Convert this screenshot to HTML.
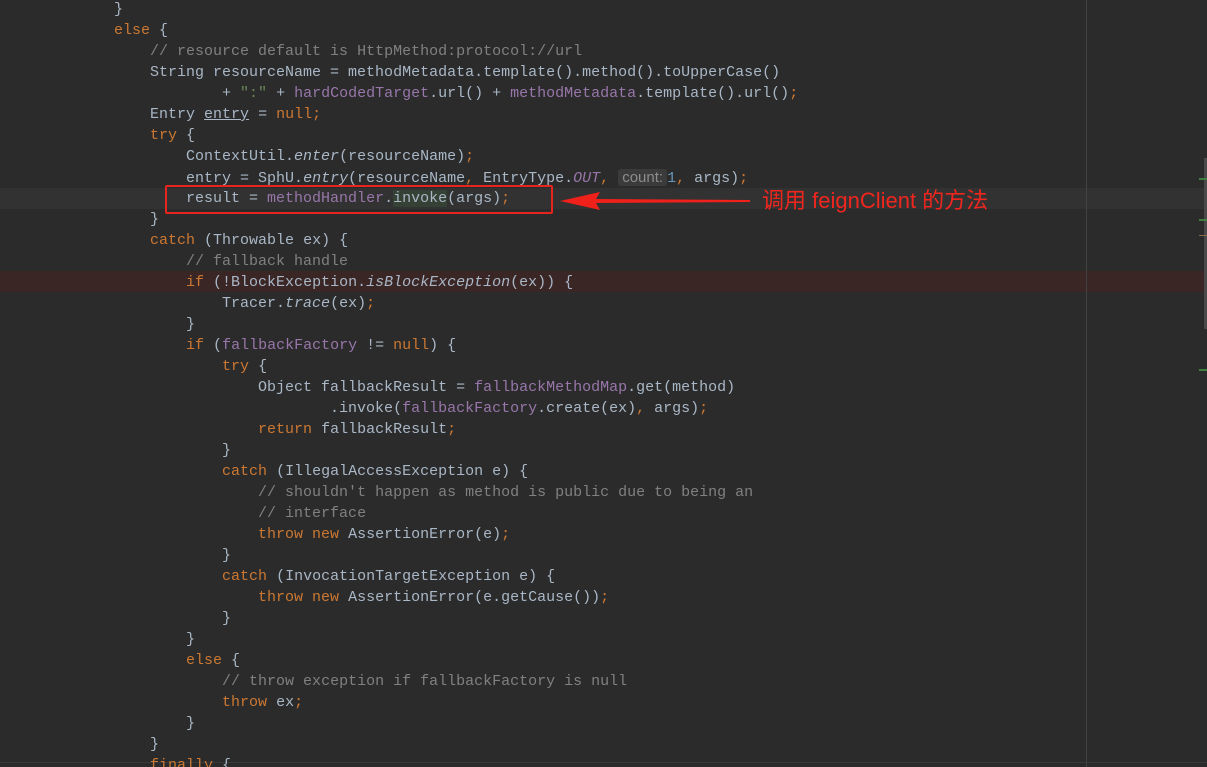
<!DOCTYPE html>
<html><head><meta charset="utf-8"><style>
html,body{margin:0;padding:0;background:#2b2b2b;width:1207px;height:767px;overflow:hidden;position:relative}
.l{position:absolute;left:6px;height:21px;line-height:21px;font-family:"Liberation Mono",monospace;font-size:15px;color:#a9b7c6;white-space:pre;margin-top:2px}
.k{color:#cc7832}.c{color:#808080}.f{color:#9876aa}.s{color:#6a8759}.n{color:#6897bb}.i{font-style:italic}.fi{color:#9876aa;font-style:italic}
.u{text-decoration:underline}
.hint{background:#3b3b3b;color:#8c8c8c;font-family:"Liberation Sans",sans-serif;font-size:15px;padding:0 4px;border-radius:3px}
</style></head><body>
<div style="position:absolute;left:0;top:188px;width:1207px;height:21px;background:#323232"></div>
<div style="position:absolute;left:0;top:271px;width:1207px;height:21px;background:#3b2626"></div>
<div style="position:absolute;left:1086px;top:0;width:1px;height:767px;background:#424242"></div>
<div style="position:absolute;left:1204px;top:158px;width:3px;height:171px;background:#4a4a4a"></div>
<div style="position:absolute;left:1199px;top:178px;width:8px;height:2px;background:#3f7f3f"></div>
<div style="position:absolute;left:1199px;top:219px;width:8px;height:2px;background:#3f7f3f"></div>
<div style="position:absolute;left:1199px;top:235px;width:8px;height:1px;background:#8a6a4a"></div>
<div style="position:absolute;left:1199px;top:369px;width:8px;height:2px;background:#3f7f3f"></div>
<div style="position:absolute;left:0;top:762px;width:1207px;height:1px;background:#3a3a3a"></div>

<div class="l" style="top:-3px">            }</div>
<div class="l" style="top:18px">            <span class="k">else</span> {</div>
<div class="l" style="top:39px">                <span class="c">// resource default is HttpMethod:protocol://url</span></div>
<div class="l" style="top:60px">                String resourceName = methodMetadata.template().method().toUpperCase()</div>
<div class="l" style="top:81px">                        + <span class="s">":"</span> + <span class="f">hardCodedTarget</span>.url() + <span class="f">methodMetadata</span>.template().url()<span class="k">;</span></div>
<div class="l" style="top:102px">                Entry <span class="u">entry</span> = <span class="k">null;</span></div>
<div class="l" style="top:123px">                <span class="k">try</span> {</div>
<div class="l" style="top:144px">                    ContextUtil.<span class="i">enter</span>(resourceName)<span class="k">;</span></div>
<div class="l" style="top:165px">                    entry = SphU.<span class="i">entry</span>(resourceName<span class="k">,</span> EntryType.<span class="fi">OUT</span><span class="k">,</span> <span class="hint">count:</span><span class="n">1</span><span class="k">,</span> args)<span class="k">;</span></div>
<div class="l" style="top:186px">                    result = <span class="f">methodHandler</span>.<span style="background:#344134">invoke</span>(args)<span class="k">;</span></div>
<div class="l" style="top:207px">                }</div>
<div class="l" style="top:228px">                <span class="k">catch</span> (Throwable ex) {</div>
<div class="l" style="top:249px">                    <span class="c">// fallback handle</span></div>
<div class="l" style="top:270px">                    <span class="k">if</span> (!BlockException.<span class="i">isBlockException</span>(ex)) {</div>
<div class="l" style="top:291px">                        Tracer.<span class="i">trace</span>(ex)<span class="k">;</span></div>
<div class="l" style="top:312px">                    }</div>
<div class="l" style="top:333px">                    <span class="k">if</span> (<span class="f">fallbackFactory</span> != <span class="k">null</span>) {</div>
<div class="l" style="top:354px">                        <span class="k">try</span> {</div>
<div class="l" style="top:375px">                            Object fallbackResult = <span class="f">fallbackMethodMap</span>.get(method)</div>
<div class="l" style="top:396px">                                    .invoke(<span class="f">fallbackFactory</span>.create(ex)<span class="k">,</span> args)<span class="k">;</span></div>
<div class="l" style="top:417px">                            <span class="k">return</span> fallbackResult<span class="k">;</span></div>
<div class="l" style="top:438px">                        }</div>
<div class="l" style="top:459px">                        <span class="k">catch</span> (IllegalAccessException e) {</div>
<div class="l" style="top:480px">                            <span class="c">// shouldn't happen as method is public due to being an</span></div>
<div class="l" style="top:501px">                            <span class="c">// interface</span></div>
<div class="l" style="top:522px">                            <span class="k">throw new</span> AssertionError(e)<span class="k">;</span></div>
<div class="l" style="top:543px">                        }</div>
<div class="l" style="top:564px">                        <span class="k">catch</span> (InvocationTargetException e) {</div>
<div class="l" style="top:585px">                            <span class="k">throw new</span> AssertionError(e.getCause())<span class="k">;</span></div>
<div class="l" style="top:606px">                        }</div>
<div class="l" style="top:627px">                    }</div>
<div class="l" style="top:648px">                    <span class="k">else</span> {</div>
<div class="l" style="top:669px">                        <span class="c">// throw exception if fallbackFactory is null</span></div>
<div class="l" style="top:690px">                        <span class="k">throw</span> ex<span class="k">;</span></div>
<div class="l" style="top:711px">                    }</div>
<div class="l" style="top:732px">                }</div>
<div class="l" style="top:753px">                <span class="k">finally</span> {</div>

<div style="position:absolute;left:165px;top:185px;width:384px;height:25px;border:2px solid #e8241e;border-radius:2px"></div>
<svg style="position:absolute;left:0;top:0" width="1207" height="767">
<polygon points="560,201 600,192 596,199 750,200 750,202 596,203 600,210" fill="#f0201a"/>
</svg>
<div style="position:absolute;left:762px;top:188px;font-family:'Liberation Sans','Noto Sans CJK SC',sans-serif;font-size:22px;line-height:26px;color:#f0261e;white-space:nowrap">调用 feignClient 的方法</div>
</body></html>
